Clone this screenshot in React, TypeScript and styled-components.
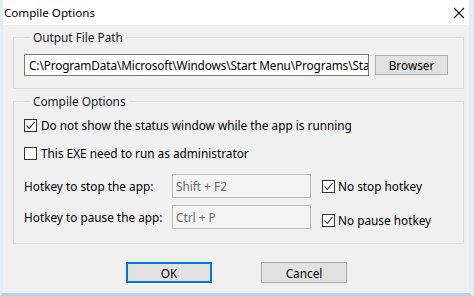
import styled, { createGlobalStyle } from 'styled-components'

const Global = createGlobalStyle`
  html, body {
    margin: 0;
    padding: 0;
    background: #ffffff;
  }
  * {
    box-sizing: border-box;
  }
`

const Window = styled.div`
  width: 474px;
  height: 296px;
  display: flex;
  flex-direction: column;
  background: #f0f0f0;
  border-left: 3px solid #e3edf7;
  border-right: 5px solid #e3edf7;
  border-bottom: 3px solid #b9d1ea;
  font-family: 'Noto Sans', 'Open Sans', sans-serif;
  font-size: 11.8px;
  color: #000;
  overflow: hidden;
`

const TitleBar = styled.div`
  height: 25px;
  flex: none;
  display: flex;
  align-items: center;
  justify-content: space-between;
  background: #ffffff;
  padding: 0 3px 0 1px;
  font-size: 11.6px;
`

const Close = styled.span`
  width: 14px;
  height: 14px;
  display: flex;
`

const Body = styled.div`
  flex: 1;
  display: flex;
  flex-direction: column;
  padding: 4px 5px 0 10px;
`

const Group = styled.fieldset<{ $top: number; $bottom: number }>`
  margin: 0;
  border: 1px solid #dcdcdc;
  border-radius: 0;
  padding: ${p => p.$top}px 12px ${p => p.$bottom}px 10px;
  min-width: 0;
  display: flex;
  flex-direction: column;

  & + & {
    margin-top: 4px;
  }
`

const Legend = styled.legend`
  padding: 0 3px;
  margin-left: 6px;
  line-height: 16px;
  color: #1a1a1a;
`

const PathRow = styled.div`
  display: flex;
  align-items: center;
  gap: 6px;
`

const PathInput = styled.div`
  width: 345px;
  height: 22px;
  flex: none;
  border: 1px solid #7a7a7a;
  background: #fff;
  padding: 0 2px 0 4px;
  display: flex;
  align-items: center;
  white-space: nowrap;
  overflow: hidden;
  letter-spacing: -0.12px;
`

const Button = styled.button<{ $default?: boolean }>`
  height: 21px;
  flex: none;
  padding: 0;
  font: inherit;
  color: #000;
  background: #e1e1e1;
  border: ${p => (p.$default ? '2px solid #0078d7' : '1px solid #adadad')};
  border-radius: 0;
  display: flex;
  align-items: center;
  justify-content: center;
`

const BrowseButton = styled(Button)`
  width: 73px;
  height: 20px;
`

const CheckRow = styled.label`
  height: 20px;
  display: flex;
  align-items: center;
  gap: 4px;
  white-space: nowrap;

  & + & {
    margin-top: 8px;
  }
`

const Box = styled.span`
  width: 13px;
  height: 13px;
  flex: none;
  border: 1px solid #333;
  background: #fff;
  display: flex;
  align-items: center;
  justify-content: center;
`

const HotkeyRow = styled.div<{ $top: number }>`
  display: flex;
  align-items: center;
  margin-top: ${p => p.$top}px;
  white-space: nowrap;
`

const HotkeyLabel = styled.span`
  width: 148px;
  flex: none;
`

const HotkeyInput = styled.div`
  width: 139px;
  height: 24px;
  flex: none;
  border: 1px solid #bcbcbc;
  background: #f4f4f4;
  color: #6d6d6d;
  padding: 0 3px;
  display: flex;
  align-items: center;
`

const HotkeyCheck = styled.label<{ $drop: number }>`
  display: flex;
  align-items: center;
  gap: 3px;
  margin-left: 11px;
  position: relative;
  top: ${p => p.$drop}px;
`

const Footer = styled.div`
  display: flex;
  justify-content: center;
  gap: 49px;
  padding-top: 18px;
  padding-right: 4px;
`

const DialogButton = styled(Button)`
  width: 86px;
`

const Check = ({ on }: { on?: boolean }) => (
  <Box>
    {on && (
      <svg width="11" height="11" viewBox="0 0 11 11">
        <path d="M1.5 5.5 L4.3 8.5 L9.5 2" fill="none" stroke="#222" strokeWidth="1.1" />
      </svg>
    )}
  </Box>
)

export default function App() {
  return (
    <>
      <Global />
      <Window>
        <TitleBar>
          <span>Compile Options</span>
          <Close>
            <svg width="14" height="14" viewBox="0 0 14 14">
              <path d="M2 2 L12 12 M12 2 L2 12" stroke="#111" strokeWidth="1.1" />
            </svg>
          </Close>
        </TitleBar>
        <Body>
          <Group $top={9} $bottom={12}>
            <Legend>Output File Path</Legend>
            <PathRow>
              <PathInput>C:\ProgramData\Microsoft\Windows\Start Menu\Programs\Sta</PathInput>
              <BrowseButton>Browser</BrowseButton>
            </PathRow>
          </Group>
          <Group $top={6} $bottom={14}>
            <Legend>Compile Options</Legend>
            <CheckRow>
              <Check on />
              Do not show the status window while the app is running
            </CheckRow>
            <CheckRow>
              <Check />
              This EXE need to run as administrator
            </CheckRow>
            <HotkeyRow $top={11}>
              <HotkeyLabel>Hotkey to stop the app:</HotkeyLabel>
              <HotkeyInput>Shift + F2</HotkeyInput>
              <HotkeyCheck $drop={0}>
                <Check on />
                No stop hotkey
              </HotkeyCheck>
            </HotkeyRow>
            <HotkeyRow $top={7}>
              <HotkeyLabel>Hotkey to pause the app:</HotkeyLabel>
              <HotkeyInput>Ctrl + P</HotkeyInput>
              <HotkeyCheck $drop={3}>
                <Check on />
                No pause hotkey
              </HotkeyCheck>
            </HotkeyRow>
          </Group>
          <Footer>
            <DialogButton $default>OK</DialogButton>
            <DialogButton>Cancel</DialogButton>
          </Footer>
        </Body>
      </Window>
    </>
  )
}
